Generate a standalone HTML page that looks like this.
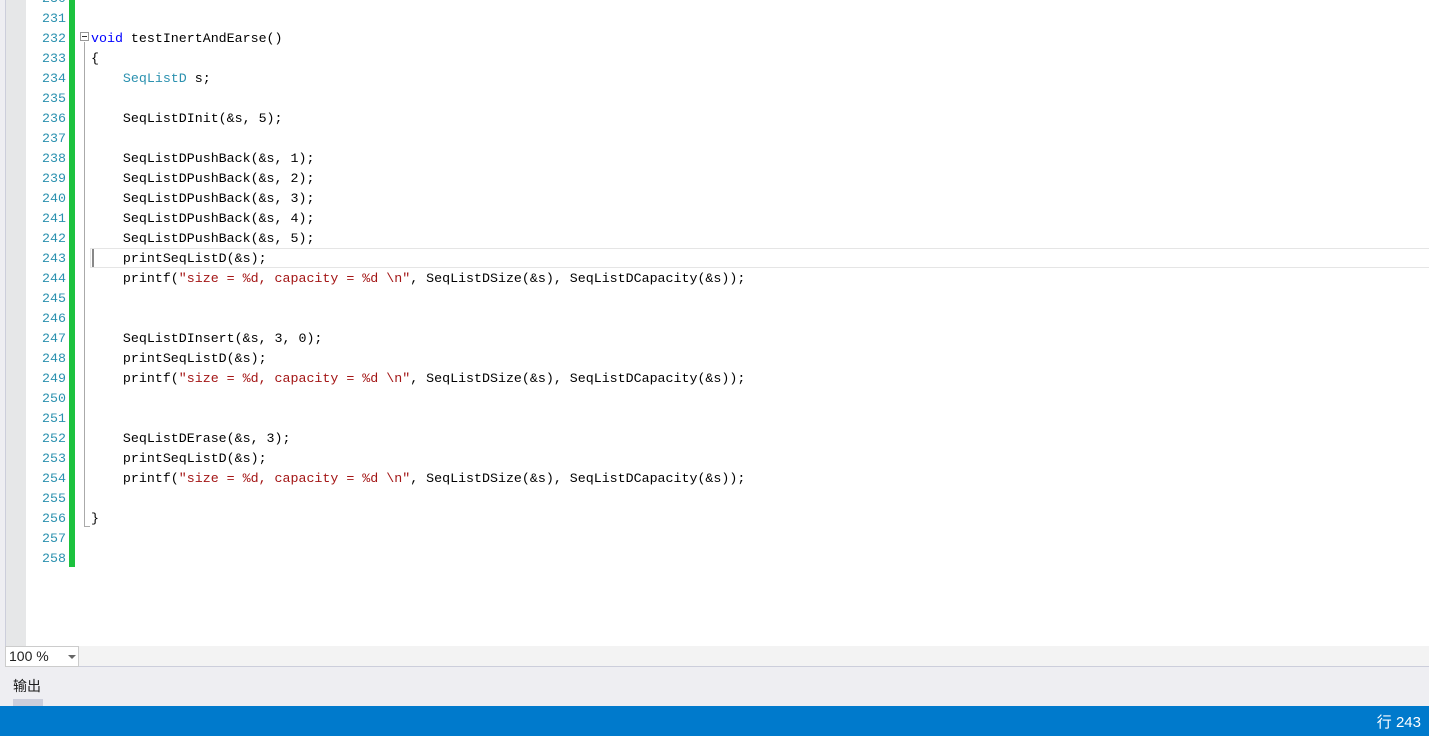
<!DOCTYPE html>
<html><head><meta charset="utf-8"><style>
body{margin:0;width:1429px;height:736px;overflow:hidden;background:#fff;position:relative;font-family:"Liberation Mono",monospace}
.a{position:absolute}
.ln{position:absolute;left:26px;width:40px;text-align:right;color:#2b91af;font-size:13.3px;line-height:20px;height:20px}
.cd{position:absolute;left:91px;font-size:13.3px;line-height:20px;height:20px;white-space:pre;color:#000}
.k{color:#00f}.t{color:#2b91af}.s{color:#a31515}
</style></head><body>
<div class="a" style="left:0;top:0;width:5px;height:667px;background:#eeeef2;border-right:1px solid #cccedb"></div>
<div class="a" style="left:6px;top:0;width:20px;height:646px;background:#e6e7e8"></div>
<div class="a" style="left:69px;top:0;width:6px;height:567px;background:#1cc23e"></div>
<div class="a" style="left:90px;top:248px;width:1339px;height:20px;border:1px solid #e5e5e5;border-right:none;box-sizing:border-box"></div>
<div class="a" style="left:92px;top:249px;width:2px;height:18px;background:#888"></div>
<div class="a" style="left:80px;top:32px;width:9px;height:9px;border:1px solid #999;box-sizing:border-box"></div>
<div class="a" style="left:82px;top:36px;width:5px;height:1px;background:#333"></div>
<div class="a" style="left:84px;top:42px;width:1px;height:484px;background:#aaa"></div>
<div class="a" style="left:84px;top:526px;width:6px;height:1px;background:#aaa"></div>
<div id="L"></div>
<div class="a" style="left:5px;top:646px;width:1424px;height:21px;background:#f3f3f3;border-bottom:1px solid #cccedb;box-sizing:border-box"></div>
<div class="a" style="left:5px;top:646px;width:74px;height:21px;background:#fff;border:1px solid #ccc;box-sizing:border-box;font-family:'Liberation Sans',sans-serif;font-size:14px;line-height:19px;padding-left:3px;color:#1e1e1e">100 %</div>
<div class="a" style="left:68px;top:655px;width:0;height:0;border-left:4px solid transparent;border-right:4px solid transparent;border-top:4px solid #666"></div>
<div class="a" style="left:0;top:667px;width:1429px;height:39px;background:#eeeef2"></div>
<div class="a" style="left:13px;top:676px;font-family:'Liberation Sans','Noto Sans CJK SC',sans-serif;font-size:14px;color:#1e1e1e">输出</div>
<div class="a" style="left:13px;top:699px;width:30px;height:7px;background:#cccedb"></div>
<div class="a" style="left:0;top:706px;width:1429px;height:30px;background:#007acc"></div>
<div class="a" style="right:8px;top:711px;font-family:'Liberation Sans','Noto Sans CJK SC',sans-serif;font-size:15px;color:#fff">行 243</div>
<script>
var c={232:'<span class="k">void</span> testInertAndEarse()',233:'{',234:'    <span class="t">SeqListD</span> s;',236:'    SeqListDInit(&amp;s, 5);',238:'    SeqListDPushBack(&amp;s, 1);',239:'    SeqListDPushBack(&amp;s, 2);',240:'    SeqListDPushBack(&amp;s, 3);',241:'    SeqListDPushBack(&amp;s, 4);',242:'    SeqListDPushBack(&amp;s, 5);',243:'    printSeqListD(&amp;s);',247:'    SeqListDInsert(&amp;s, 3, 0);',248:'    printSeqListD(&amp;s);',252:'    SeqListDErase(&amp;s, 3);',253:'    printSeqListD(&amp;s);',256:'}'};
var p='    printf(<span class="s">"size = %d, capacity = %d \\n"</span>, SeqListDSize(&amp;s), SeqListDCapacity(&amp;s));';
c[244]=p;c[249]=p;c[254]=p;
var h='';
for(var n=230;n<=258;n++){var t=9+(n-231)*20;h+='<div class="ln" style="top:'+t+'px">'+n+'</div>';if(c[n])h+='<div class="cd" style="top:'+t+'px">'+c[n]+'</div>';}
document.getElementById('L').innerHTML=h;
</script>
</body></html>
